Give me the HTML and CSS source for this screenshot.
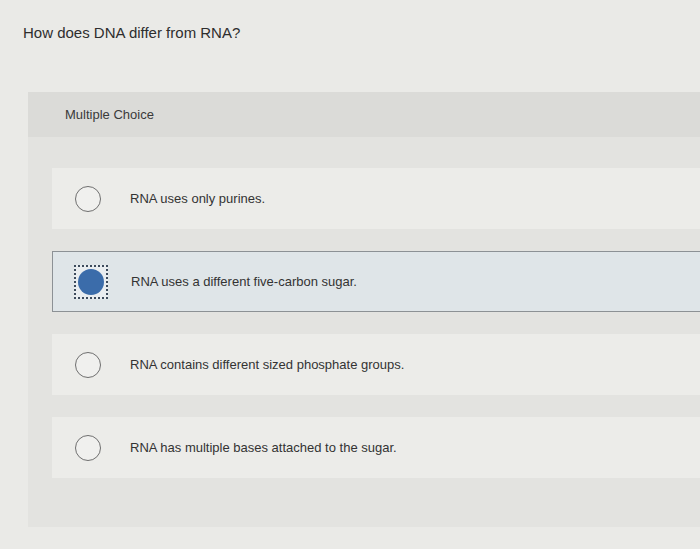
FILE: index.html
```html
<!DOCTYPE html>
<html lang="en">
<head>
  <meta charset="UTF-8">
  <meta name="viewport" content="width=device-width, initial-scale=1.0">
  <title>How does DNA differ from RNA?</title>
  <link rel="stylesheet" href="styles.css">
</head>
<body>
  <p class="question">How does DNA differ from RNA?</p>

  <div class="panel">
    <div class="panel-header">Multiple Choice</div>
    <div class="choices">
      <label class="choice">
        <span class="radio"></span>
        <span class="choice-text">RNA uses only purines.</span>
      </label>
      <label class="choice selected">
        <span class="focus-ring"><span class="radio checked"></span></span>
        <span class="choice-text">RNA uses a different five-carbon sugar.</span>
      </label>
      <label class="choice">
        <span class="radio"></span>
        <span class="choice-text">RNA contains different sized phosphate groups.</span>
      </label>
      <label class="choice">
        <span class="radio"></span>
        <span class="choice-text">RNA has multiple bases attached to the sugar.</span>
      </label>
    </div>
  </div>
</body>
</html>
```

FILE: styles.css
```css
body {
  font-family: "Liberation Sans", Arial, sans-serif;
  background-color: #eaeae7;
  color: #333;
  margin: 0;
  padding: 0;
  overflow: hidden;
}
.question {
  margin: 0;
  padding: 24px 0 0 23px;
  font-size: 15px;
  line-height: 18px;
  color: #2e2e2e;
}
.panel {
  margin: 50px 0 0 28px;
  background-color: #e3e3e0;
}
.panel-header {
  height: 45px;
  line-height: 45px;
  padding-left: 37px;
  font-size: 13px;
  color: #3a3a3a;
  background-color: #dbdbd8;
}
.choices {
  display: flex;
  flex-direction: column;
  gap: 22px;
  padding: 31px 0 49px 24px;
}
.choice {
  display: flex;
  align-items: center;
  gap: 29px;
  height: 61px;
  box-sizing: border-box;
  padding-left: 23px;
  background-color: #ecece9;
  font-size: 13px;
  color: #333;
  cursor: pointer;
}
.choice.selected {
  background-color: #dfe5e8;
  border: 1px solid #8c9195;
  border-right: none;
  padding-left: 21px;
  gap: 23px;
}
.radio {
  width: 26px;
  height: 26px;
  box-sizing: border-box;
  border-radius: 50%;
  border: 1.5px solid #6f6f6f;
  background-color: #f0f0ee;
  flex-shrink: 0;
}
.focus-ring {
  display: flex;
  padding: 2px;
  border: 2px dotted #3d4b5c;
  background-color: #e9edf0;
}
.radio.checked {
  border: none;
  background-color: #3b6caa;
}
```
